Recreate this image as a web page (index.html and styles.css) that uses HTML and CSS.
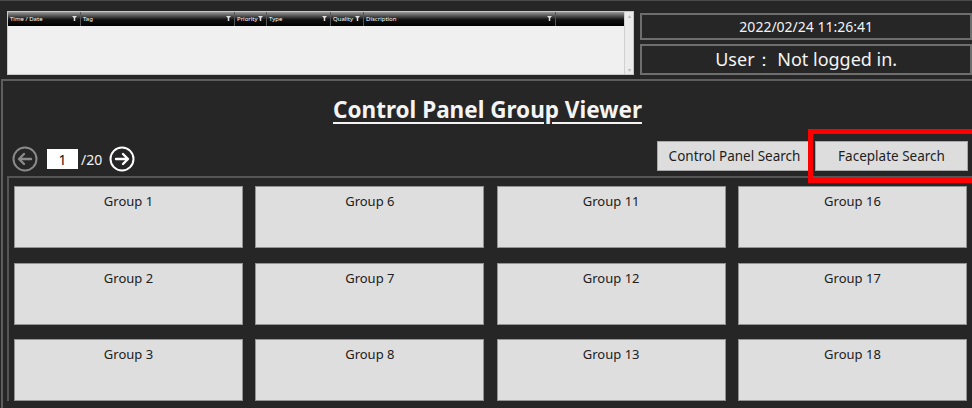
FILE: index.html
```html
<!DOCTYPE html>
<html lang="en">
<head>
    <meta charset="UTF-8">
    <meta name="viewport" content="width=device-width, initial-scale=1.0">
    <title>Control Panel Group Viewer</title>
    <link rel="stylesheet" href="styles.css">
</head>
<body>
    <div class="top">
        <div class="alarm">
            <div class="alarm-grid">
                <div class="alarm-head">
                    <div class="col c-time">Time / Date<span class="flt"></span></div>
                    <div class="col c-tag">Tag<span class="flt"></span></div>
                    <div class="col c-prio">Priority<span class="flt"></span></div>
                    <div class="col c-type">Type<span class="flt"></span></div>
                    <div class="col c-qual">Quality<span class="flt"></span></div>
                    <div class="col c-desc">Discription<span class="flt"></span></div>
                    <div class="col c-rest"></div>
                </div>
                <div class="alarm-body"></div>
            </div>
            <div class="alarm-scroll">
                <span>&#9652;</span>
                <span>&#9662;</span>
            </div>
        </div>
        <div class="status">
            <div class="clock">2022/02/24 11:26:41</div>
            <div class="user">User： Not logged in.</div>
        </div>
    </div>

    <div class="main">
        <h1 class="title">Control Panel Group Viewer</h1>

        <div class="toolbar">
            <div class="pager">
                <button class="nav-btn disabled" title="Previous">
                    <svg width="26" height="26" viewBox="0 0 26 26">
                        <circle cx="13" cy="13" r="11.5" fill="none" stroke="currentColor" stroke-width="2"/>
                        <path d="M19 13H7.5M12 8l-5 5 5 5" fill="none" stroke="currentColor" stroke-width="2.4" stroke-linecap="round" stroke-linejoin="round"/>
                    </svg>
                </button>
                <input class="page-input" type="text" value="1">
                <span class="page-total">/20</span>
                <button class="nav-btn" title="Next">
                    <svg width="26" height="26" viewBox="0 0 26 26">
                        <circle cx="13" cy="13" r="11.5" fill="none" stroke="currentColor" stroke-width="2"/>
                        <path d="M7 13h11.5M14 8l5 5-5 5" fill="none" stroke="currentColor" stroke-width="2.4" stroke-linecap="round" stroke-linejoin="round"/>
                    </svg>
                </button>
            </div>
            <div class="search-btns">
                <button class="search-btn">Control Panel Search</button>
                <div class="highlight-wrap">
                    <button class="search-btn">Faceplate Search</button>
                    <div class="highlight"></div>
                </div>
            </div>
        </div>

        <div class="panel">
            <div class="group-grid" id="groups"></div>
        </div>
    </div>

    <script>
        // 4 columns of 5 groups each; only the first 3 rows fit on screen
        const grid = document.getElementById("groups");
        const perColumn = 5;
        const visibleRows = 3;
        for (let col = 0; col < 4; col++) {
            for (let row = 0; row < visibleRows; row++) {
                let tile = document.createElement("div");
                tile.classList.add("group");
                tile.textContent = "Group " + (col * perColumn + row + 1);
                grid.appendChild(tile);
            }
        }
    </script>
</body>
</html>
```

FILE: styles.css
```css
html, body {
    overflow: hidden;
}
body {
    margin: 0;
    width: 972px;
    height: 408px;
    background-color: #262626;
    font-family: "Noto Sans", "Open Sans", sans-serif;
    color: #f2f2f2;
    border-top: 1px solid #4a4a4a;
    box-sizing: border-box;
}
.top {
    display: flex;
    height: 78px;
    padding: 10px 0 0 7px;
    box-sizing: border-box;
}
.alarm {
    display: flex;
    width: 630px;
    height: 64px;
    background: #f0f0f0;
    border: 1px solid #c8c8c8;
    box-sizing: border-box;
}
.alarm-grid {
    flex: 1;
    display: flex;
    flex-direction: column;
}
.alarm-head {
    display: flex;
    height: 14px;
    background: linear-gradient(#9a9a9a 0%, #5a5a5a 25%, #111 55%, #000 100%);
    font-size: 6px;
    line-height: 14px;
    color: #fff;
}
.col {
    position: relative;
    padding-left: 2px;
    border-right: 1px solid #555;
    box-sizing: border-box;
    white-space: nowrap;
}
.flt {
    position: absolute;
    right: 3px;
    top: 4px;
    width: 5px;
    height: 5px;
    background: #ddd;
    clip-path: polygon(0 0, 100% 0, 65% 40%, 65% 100%, 35% 100%, 35% 40%);
}
.c-time { width: 73px; }
.c-tag { width: 154px; }
.c-prio { width: 32px; }
.c-type { width: 64px; }
.c-qual { width: 33px; }
.c-desc { width: 192px; }
.c-rest { flex: 1; border-right: none; }
.alarm-body {
    flex: 1;
    background: #f0f0f0;
}
.alarm-scroll {
    width: 8px;
    display: flex;
    flex-direction: column;
    justify-content: space-between;
    align-items: center;
    background: #ececec;
    border-left: 1px solid #d0d0d0;
    font-size: 6px;
    line-height: 8px;
    color: #b8b8b8;
}
.status {
    display: flex;
    flex-direction: column;
    gap: 4px;
    margin: 2px 0 0 6px;
    width: 333px;
}
.clock, .user {
    border: 2px solid #6e6e6e;
    box-sizing: border-box;
    text-align: center;
    color: #f4f4f4;
}
.clock {
    height: 27px;
    font-size: 14px;
    line-height: 23px;
}
.user {
    height: 31px;
    font-size: 18px;
    line-height: 26px;
}
.main {
    margin-left: 1px;
    border-top: 2px solid #5e5e5e;
    border-left: 2px solid #5e5e5e;
    height: 329px;
    box-sizing: border-box;
}
.title {
    margin: 13px 0 0;
    text-align: center;
    font-size: 22.5px;
    line-height: 32px;
    font-weight: bold;
    color: #f4f4f4;
    text-decoration: underline;
    text-decoration-thickness: 2px;
    text-underline-offset: 4px;
}
.toolbar {
    display: flex;
    justify-content: space-between;
    align-items: flex-start;
    height: 35px;
    margin-top: 15px;
}
.pager {
    display: flex;
    align-items: center;
    margin: 5px 0 0 9px;
}
.nav-btn {
    width: 26px;
    height: 26px;
    padding: 0;
    border: none;
    background: none;
    color: #ffffff;
    cursor: pointer;
}
.nav-btn.disabled {
    color: #8a8a8a;
}
.nav-btn svg {
    display: block;
}
.page-input {
    width: 31px;
    height: 20px;
    margin-left: 9px;
    padding: 0;
    border: none;
    box-sizing: border-box;
    text-align: center;
    font-family: inherit;
    font-size: 14px;
    color: #111;
}
.page-total {
    font-size: 14px;
    margin: 0 7px 0 3px;
    color: #f2f2f2;
}
.search-btns {
    display: flex;
    gap: 3px;
    margin-right: 4px;
}
.search-btn {
    height: 30px;
    padding: 0;
    background: #dddddd;
    border: 1px solid #a8a8a8;
    font-family: inherit;
    font-size: 13.5px;
    color: #1e1e1e;
    cursor: pointer;
}
.search-btns > .search-btn { width: 155px; }
.highlight-wrap .search-btn { width: 153px; }
.highlight-wrap {
    position: relative;
}
.highlight {
    position: absolute;
    left: -7px;
    top: -12px;
    width: 175px;
    height: 54px;
    border: 5px solid #ff0000;
    box-sizing: border-box;
    pointer-events: none;
}
.panel {
    margin-left: 4px;
    border-top: 2px solid #555;
    border-left: 2px solid #555;
    padding: 8px 0 0 5px;
}
.group-grid {
    display: grid;
    grid-template-columns: repeat(4, 229px);
    grid-template-rows: repeat(3, 62px);
    grid-auto-flow: column;
    column-gap: 12.33px;
    row-gap: 14.5px;
}
.group {
    background: #dedede;
    border: 1px solid #939393;
    box-sizing: border-box;
    text-align: center;
    padding-top: 5px;
    font-size: 13px;
    line-height: 18px;
    color: #202020;
}
```
